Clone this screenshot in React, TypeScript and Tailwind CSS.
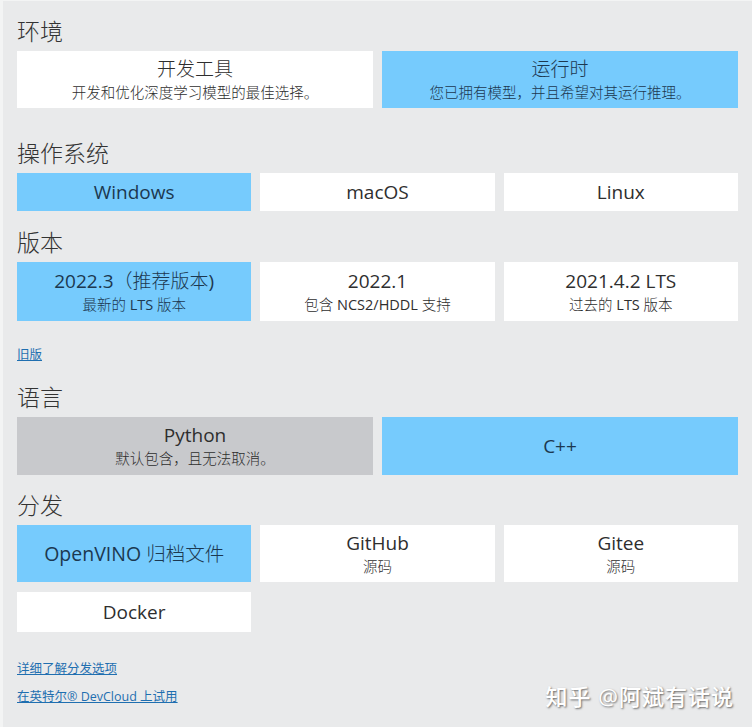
import React from 'react'

const FONT = '"Open Sans", "Noto Sans CJK SC", sans-serif'

interface Option {
  title: string;
  sub?: string;
  state?: 'on' | 'off' | 'locked';
}

// CJK glyphs render heavier than the latin ones, so thin them out on their own
function Mixed({ text }: { text: string }) {
  const parts = text.split(/([\u3000-\u9fff\uff00-\uffef]+)/)
  return (
    <span>
      {parts.map((p, i) =>
        /[\u3000-\u9fff\uff00-\uffef]/.test(p) ? (
          <span key={i} className="font-light">{p}</span>
        ) : (
          <span key={i}>{p}</span>
        )
      )}
    </span>
  )
}

function Card({ title, sub, state = 'off', h }: Option & { h: string }) {
  const bg =
    state === 'on' ? 'bg-[#76cbfd] text-[#1c3850]' : state === 'locked' ? 'bg-[#c8c9cc] text-[#2e2e2e]' : 'bg-white text-[#2e2e2e]'
  return (
    <div className={`${bg} ${h} flex flex-col items-center justify-center text-center`}>
      <div className="text-[19px] leading-[24px]"><Mixed text={title} /></div>
      {sub && <div className="text-[14.5px] leading-[20px] mt-[2px]"><Mixed text={sub} /></div>}
    </div>
  )
}

function Heading({ children, mt }: { children: React.ReactNode; mt: string }) {
  return <div className={`${mt} mb-[5px] text-[23px] leading-[30px] font-light text-[#333]`}>{children}</div>
}

export default function App() {
  return (
    <div
      className="relative min-h-[727px] bg-[#e9eaeb] border-l-[3px] border-t-[1px] border-[#f3f4f4] pl-[14px] pr-[14px] pt-[15px]"
      style={{ fontFamily: FONT }}
    >
      <Heading mt="mt-0">环境</Heading>
      <div className="grid grid-cols-2 gap-[9px]">
        <Card h="h-[57px]" title="开发工具" sub="开发和优化深度学习模型的最佳选择。" />
        <Card h="h-[57px]" title="运行时" sub="您已拥有模型，并且希望对其运行推理。" state="on" />
      </div>

      <Heading mt="mt-[30px]">操作系统</Heading>
      <div className="grid grid-cols-3 gap-[9px]">
        <Card h="h-[38px]" title="Windows" state="on" />
        <Card h="h-[38px]" title="macOS" />
        <Card h="h-[38px]" title="Linux" />
      </div>

      <Heading mt="mt-[16px]">版本</Heading>
      <div className="grid grid-cols-3 gap-[9px]">
        <Card h="h-[59px]" title="2022.3（推荐版本)" sub="最新的 LTS 版本" state="on" />
        <Card h="h-[59px]" title="2022.1" sub="包含 NCS2/HDDL 支持" />
        <Card h="h-[59px]" title="2021.4.2 LTS" sub="过去的 LTS 版本" />
      </div>

      <div className="mt-[24px] text-[12.5px] leading-[20px]">
        <a className="text-[#1f6fb0] underline">旧版</a>
      </div>

      <Heading mt="mt-[17px]">语言</Heading>
      <div className="grid grid-cols-2 gap-[9px]">
        <Card h="h-[58px]" title="Python" sub="默认包含，且无法取消。" state="locked" />
        <Card h="h-[58px]" title="C++" state="on" />
      </div>

      <Heading mt="mt-[15px]">分发</Heading>
      <div className="grid grid-cols-3 gap-x-[9px] gap-y-[10px]">
        <div className="bg-[#76cbfd] text-[#1c3850] h-[57px] flex items-center justify-center text-[19.5px]">
          <Mixed text="OpenVINO 归档文件" />
        </div>
        <Card h="h-[57px]" title="GitHub" sub="源码" />
        <Card h="h-[57px]" title="Gitee" sub="源码" />
        <Card h="h-[40px]" title="Docker" />
      </div>

      <div className="mt-[27px] text-[12.5px] leading-[20px]">
        <a className="text-[#1f6fb0] underline">详细了解分发选项</a>
      </div>
      <div className="mt-[8px] text-[12.5px] leading-[20px]">
        <a className="text-[#1f6fb0] underline">在英特尔® DevCloud 上试用</a>
      </div>

      <div className="absolute right-[18px] bottom-[16px] text-[22px] leading-[30px] text-white font-medium tracking-[1px] [text-shadow:1px_1px_2px_rgba(0,0,0,0.55)]">
        知乎 @阿斌有话说
      </div>
    </div>
  )
}
